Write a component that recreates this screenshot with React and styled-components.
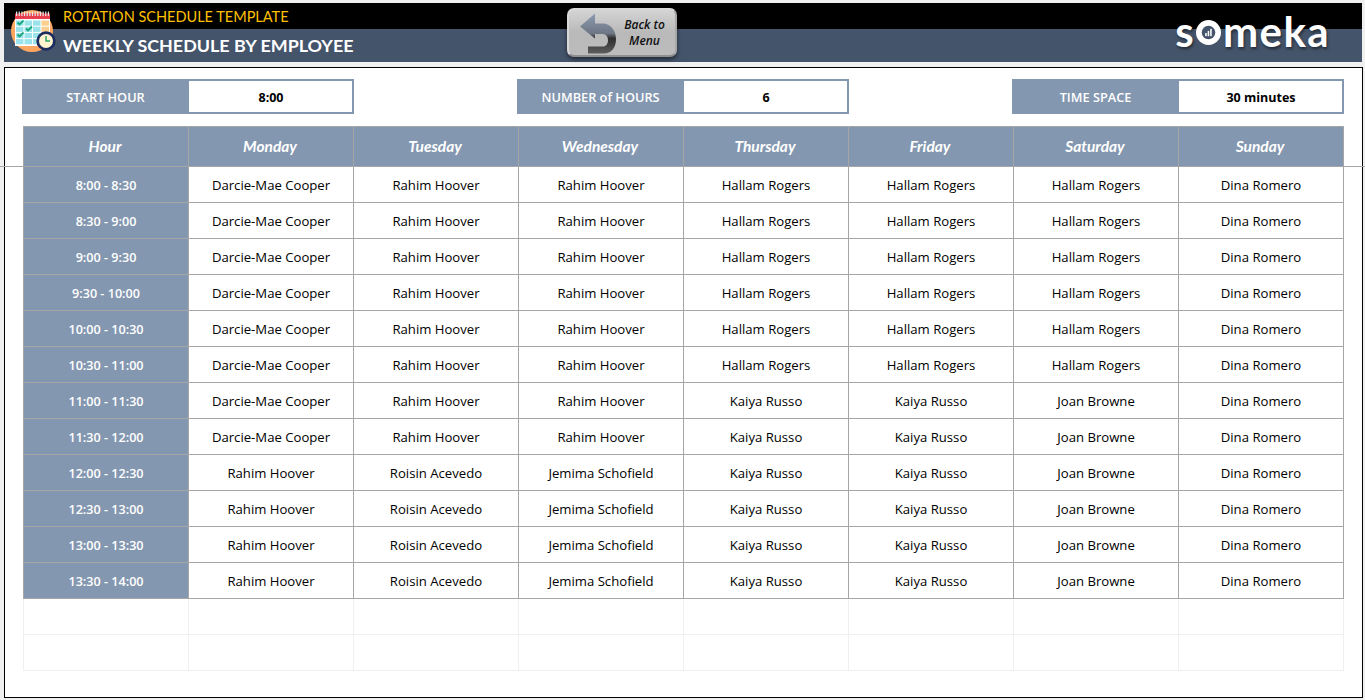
import React from "react";
import styled, { createGlobalStyle } from "styled-components";

const Global = createGlobalStyle`
  html, body { margin: 0; padding: 0; background: #f0f0f0; overflow: hidden; }
  #root { width: 1365px; height: 700px; }
`;

const Page = styled.div`
  position: relative;
  width: 1365px;
  height: 700px;
  box-sizing: border-box;
  padding: 3px 0 0 4px;
  background: #f0f0f0;
  font-family: "Open Sans", "Liberation Sans", sans-serif;
`;

const Banner = styled.header`
  width: 1358px;
  height: 59px;
  display: flex;
  align-items: flex-start;
  background: linear-gradient(to bottom, #000 0 26px, #44546a 26px 100%);
`;

const AppIcon = styled.svg`
  width: 46px;
  height: 46px;
  margin: 6px 0 0 6px;
  flex: none;
`;

const Titles = styled.div`
  width: 504px;
  margin-left: 7px;
  flex: none;
  display: flex;
  flex-direction: column;
  font-family: Lato, "Liberation Sans", sans-serif;
`;

const TopTitle = styled.div`
  margin-top: 4px;
  font-size: 14.5px;
  line-height: 19px;
  color: #ffc000;
  white-space: nowrap;
`;

const MainTitle = styled.div`
  margin-top: 7px;
  font-size: 17.9px;
  line-height: 24px;
  font-weight: 700;
  color: #fff;
  white-space: nowrap;
`;

const BackButton = styled.div`
  width: 110px;
  height: 49px;
  margin-top: 5px;
  flex: none;
  box-sizing: border-box;
  display: flex;
  align-items: center;
  border-radius: 7px;
  border: 2px solid #d8d8d8;
  border-right-color: #a8a8a8;
  border-bottom-color: #8f8f8f;
  background: linear-gradient(to bottom, #d4d4d4, #b9b9b9 50%, #bcbcbc);
  box-shadow: 0 2px 4px rgba(0, 0, 0, 0.55);
`;

const BackArrow = styled.svg`
  width: 40px;
  height: 42px;
  margin-left: 8px;
  flex: none;
`;

const BackLabel = styled.div`
  flex: 1;
  margin-right: 3px;
  text-align: center;
  font-family: "Open Sans", "Liberation Sans", sans-serif;
  font-size: 12px;
  font-weight: 600;
  font-style: italic;
  line-height: 16px;
  color: #111;
`;

const Logo = styled.div`
  margin: 3px 32px 0 auto;
  display: flex;
  align-items: baseline;
  font-family: Lato, "Liberation Sans", sans-serif;
  font-size: 42px;
  line-height: 50px;
  font-weight: 700;
  letter-spacing: 1.4px;
  color: #fff;
  text-shadow: 1px 2px 3px rgba(0, 0, 0, 0.5);
`;

const LogoO = styled.svg`
  width: 25px;
  height: 25px;
  margin: 0 2px 11px 1px;
  align-self: flex-end;
`;

const Frame = styled.main`
  width: 1359px;
  height: 631px;
  margin-top: 5px;
  box-sizing: border-box;
  padding: 11px 18px 0 17px;
  border: 1px solid #000;
  background: #fff;
  position: relative;
`;

const Controls = styled.div`
  display: flex;
  justify-content: space-between;
`;

const Control = styled.div`
  width: 332px;
  height: 35px;
  box-sizing: border-box;
  display: flex;
  border: 2px solid #8497b0;
  border-left: 0;
  background: #8497b0;
`;

const ControlLabel = styled.div`
  width: 167px;
  flex: none;
  box-sizing: border-box;
  padding-top: 1px;
  display: flex;
  align-items: center;
  justify-content: center;
  font-size: 12.75px;
  font-weight: 600;
  color: #fff;
`;

const ControlValue = styled.div`
  flex: 1;
  padding: 1px 0 0 1px;
  display: flex;
  align-items: center;
  justify-content: center;
  background: #fff;
  font-size: 12.5px;
  font-weight: 700;
  color: #000;
`;

const Table = styled.div`
  width: 1321px;
  margin: 12px 0 0 1px;
  display: grid;
  grid-template-columns: 166px repeat(7, 165px);
  grid-template-rows: 41px;
  grid-auto-rows: 36px;
  position: relative;
  z-index: 1;
`;

const HeadCell = styled.div`
  box-sizing: border-box;
  padding: 0 2px 2px 0;
  display: flex;
  align-items: center;
  justify-content: center;
  border-top: 1px solid #a6a6a6;
  border-right: 1px solid #a6a6a6;
  border-bottom: 1px solid #a6a6a6;
  border-left: ${(p) => (p.$first ? "1px solid #a6a6a6" : "0")};
  background: #8497b0;
  color: #fff;
  font-family: Lato, "Liberation Sans", sans-serif;
  font-size: 15.5px;
  font-weight: 700;
  font-style: italic;
`;

const Cell = styled.div`
  box-sizing: border-box;
  display: flex;
  align-items: center;
  justify-content: center;
  border-right: 1px solid #a6a6a6;
  border-bottom: 1px solid #a6a6a6;
  border-left: ${(p) => (p.$first ? "1px solid #a6a6a6" : "0")};
  background: #fff;
  font-size: 13.15px;
  color: #000;
  white-space: nowrap;
`;

const HourCell = styled(Cell)`
  padding: 1px 0 0;
  background: #8497b0;
  color: #fff;
  font-size: 12.6px;
  font-weight: 600;
`;

const BlankCell = styled.div`
  box-sizing: border-box;
  border-right: 1px solid #f0f0f0;
  border-bottom: 1px solid #f0f0f0;
  border-left: ${(p) => (p.$first ? "1px solid #f0f0f0" : "0")};
  background: #fff;
`;

const FreezeLine = styled.div`
  position: absolute;
  left: 0;
  top: 166px;
  width: 1365px;
  height: 1px;
  background: #a6a6a6;
  pointer-events: none;
`;

const DAYS = ["Monday", "Tuesday", "Wednesday", "Thursday", "Friday", "Saturday", "Sunday"];
const HOURS = [
  "8:00 - 8:30", "8:30 - 9:00", "9:00 - 9:30", "9:30 - 10:00", "10:00 - 10:30", "10:30 - 11:00",
  "11:00 - 11:30", "11:30 - 12:00", "12:00 - 12:30", "12:30 - 13:00", "13:00 - 13:30", "13:30 - 14:00",
];
const DM = "Darcie-Mae Cooper", RH = "Rahim Hoover", RA = "Roisin Acevedo", JS = "Jemima Schofield",
  HR = "Hallam Rogers", KR = "Kaiya Russo", JB = "Joan Browne", DR = "Dina Romero";
const rowFor = (i) =>
  i < 6 ? [DM, RH, RH, HR, HR, HR, DR]
  : i < 8 ? [DM, RH, RH, KR, KR, JB, DR]
  : [RH, RA, JS, KR, KR, JB, DR];

const CONTROLS = [
  ["START HOUR", "8:00"],
  ["NUMBER of HOURS", "6"],
  ["TIME SPACE", "30 minutes"],
];

const CalendarIcon = () => (
  <AppIcon viewBox="0 0 46 46">
    <circle cx="22" cy="22" r="21" fill="#fba761" />
    <rect x="5" y="9" width="35" height="28" fill="#fff" />
    <rect x="5" y="4.5" width="35" height="5.5" fill="#e8404f" />
    {Array.from({ length: 13 }, (_, i) => (
      <rect key={i} x={6 + i * 2.65} y="2.5" width="1.2" height="4.5" fill="#e4e8ea" />
    ))}
    {[0, 1, 2, 3].map((r) =>
      [0, 1, 2, 3].map((c) => (
        <rect key={`${r}-${c}`} x={6 + c * 8.5} y={11.5 + r * 6.2} width="7.5" height="5.2"
          fill={c === 3 ? "#fbd08f" : "#9be3ea"} />
      ))
    )}
    <path d="M7.5 13.5l2 2 4-4M16 19.5l2 2 4-4M7.5 25.5l2 2 4-4" fill="none" stroke="#19a77d" strokeWidth="1.8" />
    <circle cx="36" cy="32" r="9.7" fill="#1d2c5e" />
    <circle cx="36" cy="32" r="7" fill="#fff3cf" />
    <path d="M36 27v5h4" fill="none" stroke="#2aa56f" strokeWidth="1.5" />
  </AppIcon>
);

const ArrowIcon = () => (
  <BackArrow viewBox="0 0 40 42">
    <defs>
      <linearGradient id="arrowFill" x1="0" y1="0" x2="0" y2="1">
        <stop offset="0" stopColor="#8d9bb0" />
        <stop offset="0.5" stopColor="#6d7684" />
        <stop offset="0.62" stopColor="#2d2d2d" />
        <stop offset="1" stopColor="#5e5e5e" />
      </linearGradient>
    </defs>
    <path
      d="M18 1.5 L3 14.5 L18 26.5 L18 22 L26 22 C29 22 31 25 31 28 C31 32 29 34.5 26 34.5 L11 34.5 L11 41.5 L27 41.5 C35 41.5 39 35 39 27 C39 18 33 11.5 26 11.5 L18 11.5 Z"
      fill="url(#arrowFill)"
    />
  </BackArrow>
);

const LogoMark = () => (
  <LogoO viewBox="0 0 24 24">
    <circle cx="12" cy="12" r="12" fill="#fff" />
    <circle cx="12" cy="12" r="6.5" fill="#44546a" />
    <rect x="8.8" y="12.5" width="1.5" height="3" fill="#fff" />
    <rect x="11.2" y="10.5" width="1.5" height="5" fill="#fff" />
    <rect x="13.6" y="8.5" width="1.5" height="7" fill="#fff" />
  </LogoO>
);

export default function App() {
  return (
    <Page>
      <Global />
      <Banner>
        <CalendarIcon />
        <Titles>
          <TopTitle>ROTATION SCHEDULE TEMPLATE</TopTitle>
          <MainTitle>WEEKLY SCHEDULE BY EMPLOYEE</MainTitle>
        </Titles>
        <BackButton>
          <ArrowIcon />
          <BackLabel>Back to<br />Menu</BackLabel>
        </BackButton>
        <Logo>s<LogoMark />meka</Logo>
      </Banner>
      <Frame>
        <Controls>
          {CONTROLS.map(([label, value]) => (
            <Control key={label}>
              <ControlLabel>{label}</ControlLabel>
              <ControlValue>{value}</ControlValue>
            </Control>
          ))}
        </Controls>
        <Table>
          <HeadCell $first>Hour</HeadCell>
          {DAYS.map((d) => <HeadCell key={d}>{d}</HeadCell>)}
          {HOURS.map((h, i) => (
            <React.Fragment key={h}>
              <HourCell $first>{h}</HourCell>
              {rowFor(i).map((n, c) => <Cell key={c}>{n}</Cell>)}
            </React.Fragment>
          ))}
          {[0, 1].map((r) =>
            Array.from({ length: 8 }, (_, c) => <BlankCell key={`${r}-${c}`} $first={c === 0} />)
          )}
        </Table>
      </Frame>
      <FreezeLine />
    </Page>
  );
}
